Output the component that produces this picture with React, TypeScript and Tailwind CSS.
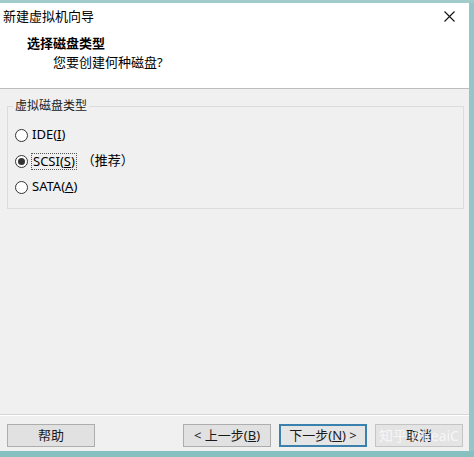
import React from "react";

const font = { fontFamily: '"Noto Sans", "Noto Sans CJK SC", sans-serif' };

function Radio({ checked }: { checked?: boolean }) {
  return (
    <span className="flex h-[13px] w-[13px] items-center justify-center rounded-full border border-[#333333] bg-white">
      {checked && <span className="h-[7px] w-[7px] rounded-full bg-[#333333]" />}
    </span>
  );
}

function Btn({ children, focused, extra, light }: { children: React.ReactNode; focused?: boolean; extra?: React.ReactNode; light?: boolean }) {
  return (
    <div
      className={
        "relative flex h-[23px] w-[88px] items-center justify-center text-[13px] leading-none text-[#1a1a1a] " +
        (focused
          ? "border-2 border-[#3a82ad] bg-[#e5e5e5]"
          : light
          ? "border border-[#c4c4c4] bg-[#e4e4e4]"
          : "border border-[#adadad] bg-[#e1e1e1]")
      }
    >
      {children}
      {extra}
    </div>
  );
}

export default function App() {
  return (
    <div className="flex h-[457px] w-[474px] flex-col bg-[#8fc5c5]" style={font}>
      <div className="h-[3px] bg-[#a2cccc]" />
      <div className="flex flex-1">
        <div className="flex w-[469px] flex-col">
          {/* title bar */}
          <div className="flex h-[27px] items-center justify-between bg-white pl-[3px] pr-[14px]">
            <span className="text-[13px] text-black">新建虚拟机向导</span>
            <svg width="11" height="11" viewBox="0 0 11 11">
              <path d="M0.5 0.5 L10.5 10.5 M10.5 0.5 L0.5 10.5" stroke="#111" strokeWidth="1.1" />
            </svg>
          </div>
          {/* header */}
          <div className="flex h-[58px] flex-col bg-white pt-[4px] text-[13px] leading-[18px] text-black">
            <span className="pl-[27px] font-bold">选择磁盘类型</span>
            <span className="pl-[53px] pt-[1px]">您要创建何种磁盘?</span>
          </div>
          <div className="h-px bg-[#bdbdbd]" />
          {/* body */}
          <div className="flex flex-1 flex-col bg-[#f0f0f0]">
            <fieldset className="ml-[7px] mr-[5px] mt-[8px] border border-[#dcdcdc] pb-[8px] pl-[7px] pt-[7px]">
              <legend className="-ml-[2px] px-[2px] text-[12px] leading-[18px] text-[#1a1a1a]">虚拟磁盘类型</legend>
              <div className="flex h-[26px] items-center gap-[4px] text-[13px] text-black">
                <Radio />
                <span>
                  IDE(<span className="underline">I</span>)
                </span>
              </div>
              <div className="flex h-[26px] items-center gap-[3px] text-[13px] text-black">
                <Radio checked />
                <span className="border border-dotted border-[#555] px-px leading-[15px]">
                  SCSI(<span className="underline">S</span>)
                </span>
                <span className="ml-[2px]">（推荐）</span>
              </div>
              <div className="flex h-[26px] items-center gap-[4px] text-[13px] text-black">
                <Radio />
                <span>
                  SATA(<span className="underline">A</span>)
                </span>
              </div>
            </fieldset>
            <div className="mt-auto h-px bg-[#d7d7d7]" />
            <div className="h-px bg-white" />
            <div className="flex items-center pb-[4px] pl-[7px] pr-[6px] pt-[8px]">
              <Btn>帮助</Btn>
              <div className="flex-1" />
              <div className="flex gap-[8px]">
                <Btn>
                  &lt; 上一步(<span className="underline">B</span>)
                </Btn>
                <Btn focused>
                  下一步(<span className="underline">N</span>) &gt;
                </Btn>
                <Btn
                  light
                  extra={
                    <span className="absolute inset-0 flex items-center justify-center text-[14px] text-white/70">
                      知乎 @keaiC
                    </span>
                  }
                >
                  取消
                </Btn>
              </div>
            </div>
          </div>
        </div>
        <div className="flex-1 bg-[#93c6c7]" />
      </div>
      <div className="h-[6px] bg-[#86c0c0]" />
    </div>
  );
}
